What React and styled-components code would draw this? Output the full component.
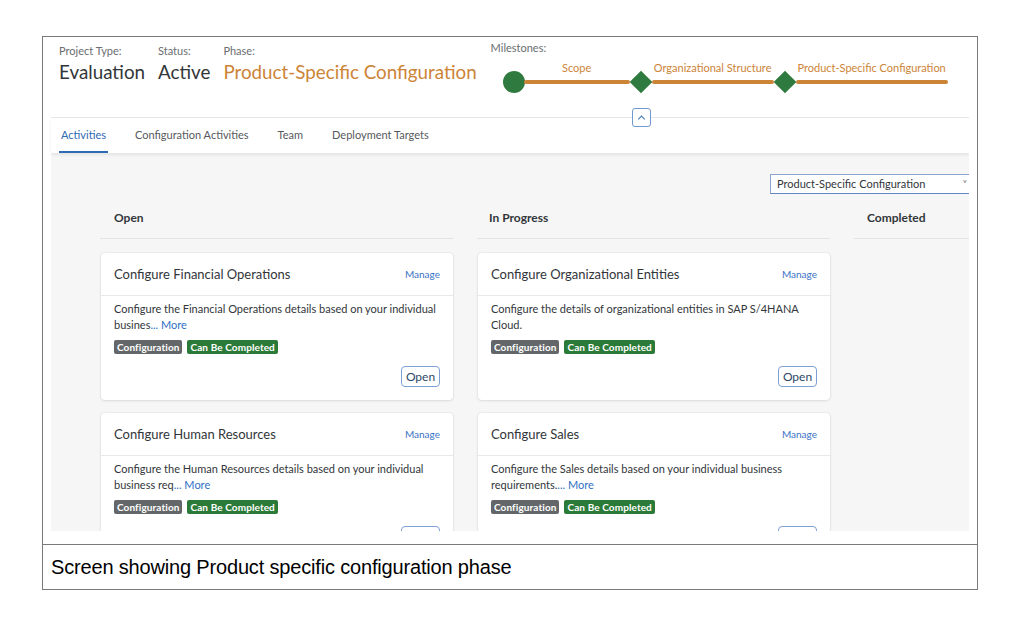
import styled, { createGlobalStyle } from "styled-components";

const GlobalStyle = createGlobalStyle`
  body {
    margin: 0;
    background: #fff;
    font-family: Lato, "Liberation Sans", sans-serif;
    color: #32363a;
  }
`;

const cards = {
  open: [
    {
      title: "Configure Financial Operations",
      text: "Configure the Financial Operations details based on your individual busines",
      more: "... More",
    },
    {
      title: "Configure Human Resources",
      text: "Configure the Human Resources details based on your individual business req",
      more: "... More",
    },
  ],
  progress: [
    {
      title: "Configure Organizational Entities",
      text: "Configure the details of organizational entities in SAP S/4HANA Cloud.",
      more: "",
    },
    {
      title: "Configure Sales",
      text: "Configure the Sales details based on your individual business requirements.",
      more: "... More",
    },
  ],
};

const ActivityCard = ({ title, text, more }) => (
  <Card>
    <CardHead>
      <CardTitle>{title}</CardTitle>
      <ManageLink>Manage</ManageLink>
    </CardHead>
    <CardBody>
      <Desc>
        {text}
        {more && <MoreLink>{more}</MoreLink>}
      </Desc>
      <Tags>
        <Tag>Configuration</Tag>
        <Tag $green>Can Be Completed</Tag>
      </Tags>
      <CardFoot>
        <OpenButton>Open</OpenButton>
      </CardFoot>
    </CardBody>
  </Card>
);

const App = () => {
  return (
    <>
      <GlobalStyle />
      <Frame>
        <ShotArea>
          <Shot>
            <Header>
              <Field>
                <FieldLabel>Project Type:</FieldLabel>
                <FieldValue>Evaluation</FieldValue>
              </Field>
              <Field>
                <FieldLabel>Status:</FieldLabel>
                <FieldValue>Active</FieldValue>
              </Field>
              <Field>
                <FieldLabel>Phase:</FieldLabel>
                <FieldValue $accent>Product-Specific Configuration</FieldValue>
              </Field>
              <Milestones>
                <MilestonesLabel>Milestones:</MilestonesLabel>
                <Timeline>
                  <StartNode />
                  <Segment $w={104}>
                    <SegLabel>Scope</SegLabel>
                    <BarWrap>
                      <Bar />
                    </BarWrap>
                  </Segment>
                  <DiamondNode />
                  <Segment $w={120}>
                    <SegLabel>Organizational Structure</SegLabel>
                    <BarWrap>
                      <Bar />
                    </BarWrap>
                  </Segment>
                  <DiamondNode />
                  <Segment $w={150}>
                    <SegLabel>Product-Specific Configuration</SegLabel>
                    <BarWrap>
                      <Bar />
                    </BarWrap>
                  </Segment>
                </Timeline>
              </Milestones>
              <CollapseButton>
                <svg width="11" height="11" viewBox="0 0 12 12">
                  <path d="M2.5 8 L6 4.5 L9.5 8" fill="none" stroke="#4a7cc0" strokeWidth="1.2" />
                </svg>
              </CollapseButton>
            </Header>
            <TabBar>
              <Tab $active>Activities</Tab>
              <Tab>Configuration Activities</Tab>
              <Tab>Team</Tab>
              <Tab>Deployment Targets</Tab>
            </TabBar>
            <Content>
              <Toolbar>
                <PhaseSelect>
                  Product-Specific Configuration
                  <SelectArrow>˅</SelectArrow>
                </PhaseSelect>
              </Toolbar>
              <Board>
                <Column>
                  <ColumnHead>Open</ColumnHead>
                  {cards.open.map((c) => (
                    <ActivityCard key={c.title} {...c} />
                  ))}
                </Column>
                <Column>
                  <ColumnHead $pad={12}>In Progress</ColumnHead>
                  {cards.progress.map((c) => (
                    <ActivityCard key={c.title} {...c} />
                  ))}
                </Column>
                <Column>
                  <ColumnHead $pad={13}>Completed</ColumnHead>
                </Column>
              </Board>
            </Content>
          </Shot>
        </ShotArea>
        <Caption>Screen showing Product specific configuration phase</Caption>
      </Frame>
    </>
  );
};
export default App;

const Frame = styled.div`
  box-sizing: border-box;
  width: 936px;
  margin: 36px 0 0 42px;
  border: 1px solid #7a7a7a;
`;
const ShotArea = styled.div`
  padding-bottom: 13px;
`;
const Shot = styled.div`
  box-sizing: border-box;
  width: 926px;
  height: 494px;
  padding-left: 8px;
  overflow: hidden;
  display: flex;
  flex-direction: column;
  background: #fff;
`;
const Header = styled.div`
  position: relative;
  z-index: 2;
  box-sizing: border-box;
  height: 81px;
  flex-shrink: 0;
  display: flex;
  gap: 13px;
  padding-left: 8px;
  border-bottom: 1px solid #e6e6e6;
`;
const Field = styled.div`
  display: flex;
  flex-direction: column;
  padding-top: 7px;
`;
const FieldLabel = styled.div`
  font-size: 11px;
  line-height: 14px;
  color: #6a6d70;
`;
const FieldValue = styled.div`
  margin-top: 2px;
  font-size: 18.8px;
  line-height: 24px;
  white-space: nowrap;
  color: ${(p) => (p.$accent ? "#cc8437" : "#32363a")};
`;
const Milestones = styled.div`
  display: flex;
  flex-direction: column;
  padding-top: 4px;
  margin-left: 1px;
`;
const MilestonesLabel = styled.div`
  font-size: 11px;
  line-height: 14px;
  color: #6a6d70;
`;
const Timeline = styled.div`
  display: flex;
  align-items: flex-end;
  margin-top: 6px;
  padding-left: 12px;
`;
const StartNode = styled.div`
  width: 22px;
  height: 22px;
  margin-bottom: -4px;
  border-radius: 50%;
  background: #2f7a3e;
  flex-shrink: 0;
`;
const DiamondNode = styled.div`
  width: 24px;
  height: 22px;
  margin-bottom: -4px;
  display: flex;
  align-items: center;
  justify-content: center;
  flex-shrink: 0;

  &::before {
    content: "";
    width: 16px;
    height: 16px;
    background: #2f7a3e;
    transform: rotate(45deg);
  }
`;
const Segment = styled.div`
  width: ${(p) => p.$w}px;
  display: flex;
  flex-direction: column;
  align-items: center;
`;
const SegLabel = styled.div`
  font-size: 11px;
  line-height: 14px;
  color: #cc8437;
  white-space: nowrap;
`;
const BarWrap = styled.div`
  align-self: stretch;
  height: 14px;
  display: flex;
  align-items: center;
`;
const Bar = styled.div`
  flex: 1;
  height: 4px;
  margin: 0 -1px;
  border-radius: 2px;
  background: #cc8437;
`;
const CollapseButton = styled.div`
  position: absolute;
  left: 581px;
  top: 71px;
  box-sizing: border-box;
  width: 19px;
  height: 19px;
  border: 1px solid #7199d2;
  border-radius: 3px;
  background: #fff;
  display: flex;
  align-items: center;
  justify-content: center;
`;
const TabBar = styled.div`
  position: relative;
  z-index: 1;
  flex-shrink: 0;
  display: flex;
  gap: 25px;
  height: 35px;
  box-sizing: border-box;
  padding-left: 8px;
  background: #fff;
  box-shadow: 0 2px 3px rgba(0, 0, 0, 0.08);
`;
const Tab = styled.div`
  box-sizing: border-box;
  height: 35px;
  padding: 9px 2px 0;
  font-size: 11px;
  line-height: 16px;
  white-space: nowrap;
  color: ${(p) => (p.$active ? "#2f6bb3" : "#56595d")};
  border-bottom: 2px solid ${(p) => (p.$active ? "#2f6bb3" : "transparent")};
`;
const Content = styled.div`
  flex: 1;
  background: #f6f6f6;
  padding: 21px 0 0 49px;
  display: flex;
  flex-direction: column;
  min-width: 0;
`;
const Toolbar = styled.div`
  display: flex;
  justify-content: flex-end;
`;
const PhaseSelect = styled.div`
  position: relative;
  box-sizing: border-box;
  width: 200px;
  margin-right: -1px;
  height: 20px;
  padding-left: 6px;
  border: 1px solid #8ea6cf;
  border-bottom-color: #6687bd;
  background: #fff;
  font-size: 11px;
  line-height: 18px;
  color: #32363a;
  white-space: nowrap;
`;
const SelectArrow = styled.span`
  position: absolute;
  right: 2px;
  top: 0;
  font-size: 9px;
  color: #6a6d70;
`;
const Board = styled.div`
  display: grid;
  grid-template-columns: repeat(3, 353px);
  gap: 24px;
  margin-top: 12px;
  align-items: start;
`;
const Column = styled.div`
  display: flex;
  flex-direction: column;
  gap: 13px;
`;
const ColumnHead = styled.div`
  padding: 4px 0 12px ${(p) => p.$pad || 14}px;
  margin-bottom: 1px;
  font-size: 12px;
  line-height: 16px;
  font-weight: 700;
  color: #32363a;
  border-bottom: 1px solid #e3e3e3;
`;
const Card = styled.div`
  margin-left: 1px;
  background: #fff;
  border-radius: 4px;
  box-shadow: 0 0 2px rgba(0, 0, 0, 0.12), 0 1px 3px rgba(0, 0, 0, 0.08);
`;
const CardHead = styled.div`
  height: 42px;
  display: flex;
  align-items: center;
  justify-content: space-between;
  padding: 0 13px;
  border-bottom: 1px solid #e8e8e8;
`;
const CardTitle = styled.div`
  font-size: 13px;
  color: #32363a;
`;
const ManageLink = styled.div`
  font-size: 10px;
  color: #3b73c4;
`;
const CardBody = styled.div`
  padding: 5px 13px 13px;
`;
const Desc = styled.div`
  font-size: 11px;
  line-height: 16px;
  color: #32363a;
`;
const MoreLink = styled.span`
  color: #2f6fc4;
`;
const Tags = styled.div`
  display: flex;
  gap: 5px;
  margin-top: 7px;
`;
const Tag = styled.span`
  padding: 0 3px;
  border-radius: 2px;
  font-size: 10px;
  line-height: 14px;
  font-weight: 700;
  letter-spacing: 0.1px;
  color: #fff;
  background: ${(p) => (p.$green ? "#2b7a38" : "#646769")};
`;
const CardFoot = styled.div`
  display: flex;
  justify-content: flex-end;
  margin-top: 12px;
`;
const OpenButton = styled.div`
  box-sizing: border-box;
  width: 39px;
  height: 21px;
  border: 1px solid #7ea0d4;
  border-radius: 4px;
  font-size: 12px;
  line-height: 19px;
  text-align: center;
  color: #2e4868;
`;
const Caption = styled.div`
  height: 44px;
  border-top: 1px solid #7a7a7a;
  display: flex;
  align-items: center;
  padding-left: 8px;
  font-family: "Liberation Sans", Arial, sans-serif;
  font-size: 20px;
  letter-spacing: -0.17px;
  color: #000;
`;
